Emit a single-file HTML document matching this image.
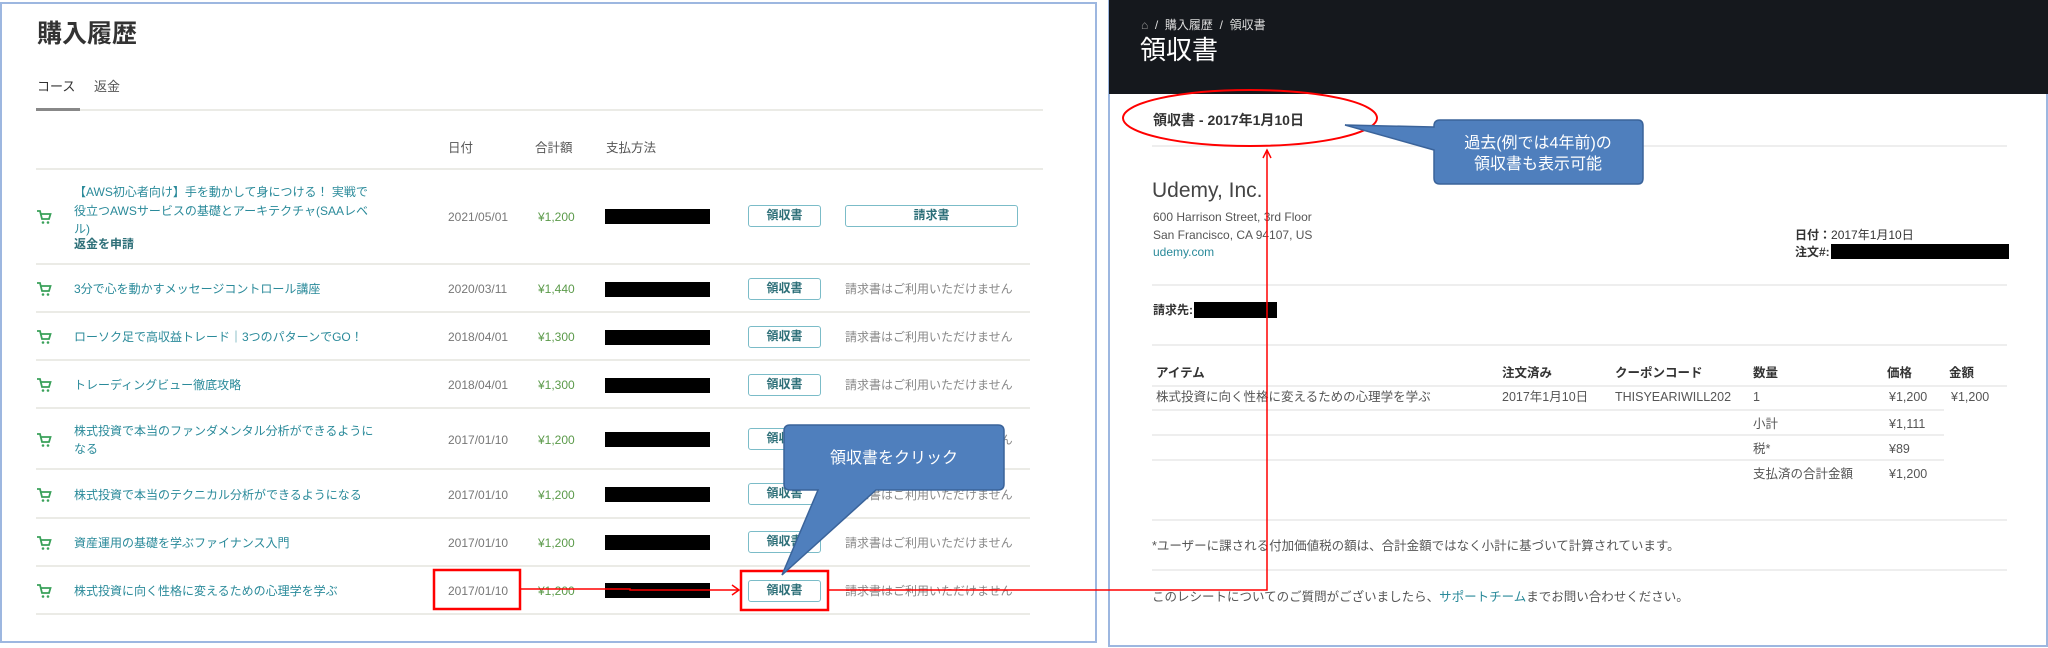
<!DOCTYPE html>
<html><head><meta charset="utf-8"><style>
*{margin:0;padding:0;box-sizing:border-box}
body{width:2048px;height:648px;background:#fff;position:relative;overflow:hidden;font-family:"Liberation Sans","Noto Sans CJK JP",sans-serif;font-size:12.5px;color:#333}
.a{position:absolute;white-space:nowrap;line-height:16px}
.hl{position:absolute;height:2px;background:#ebebe6}
.t{color:#2a8a9a;left:74px;font-size:12px}
.d{left:448px;color:#777;font-size:12px}
.p{left:538px;color:#5b9a4a;font-size:12px}
.bx{position:absolute;left:605px;width:105px;height:15px;background:#000}
.btn{position:absolute;left:748px;width:73px;height:22px;border:1.5px solid #7bbcc8;border-radius:3px;color:#2d6f78;font-weight:bold;font-size:12px;text-align:center;line-height:19px}
.na{left:845px;color:#888;font-size:12px}
.cart{position:absolute;left:36px;width:16px;height:16px}
.rl{position:absolute;height:2px;background:#eee}
.g{color:#555}
</style></head><body>
<div class="a" style="left:0;top:2px;width:1097px;height:641px;border:2px solid #9db7e0"></div>
<div class="a" style="left:37px;top:19px;font-size:25px;line-height:30px;font-weight:bold;color:#333">購入履歴</div>
<div class="a" style="left:37px;top:79px;font-size:13px">コース</div>
<div class="a" style="left:94px;top:79px;font-size:13px;color:#555">返金</div>
<div class="hl" style="left:36px;top:109px;width:1007px"></div>
<div class="a" style="left:36px;top:108px;width:44px;height:3px;background:#888"></div>
<div class="a g" style="left:448px;top:140px">日付</div>
<div class="a g" style="left:535px;top:140px">合計額</div>
<div class="a g" style="left:606px;top:140px">支払方法</div>
<div class="hl" style="left:36px;top:168px;width:1007px"></div>

<svg width="0" height="0" style="position:absolute"><defs><symbol id="c" viewBox="0 0 16 16"><path d="M1 2h3l2 8h7l1.5-5H5" fill="none" stroke="#3aa15a" stroke-width="1.8"/><circle cx="7" cy="13.5" r="1.3" fill="#3aa15a"/><circle cx="12" cy="13.5" r="1.3" fill="#3aa15a"/></symbol></defs></svg>

<svg class="cart" style="top:209px"><use href="#c"/></svg>
<div class="a t" style="top:183px;line-height:18.5px;white-space:normal;width:305px">【AWS初心者向け】手を動かして身につける！ 実戦で役立つAWSサービスの基礎とアーキテクチャ(SAAレベル)</div>
<div class="a" style="left:74px;top:236px;color:#2d6f78;font-weight:bold;font-size:12px">返金を申請</div>
<div class="a d" style="top:209px">2021/05/01</div><div class="a p" style="top:209px">¥1,200</div>
<div class="bx" style="top:209px"></div>
<div class="btn" style="top:205px">領収書</div>
<div class="btn" style="top:205px;left:845px;width:173px">請求書</div>
<div class="hl" style="left:36px;top:263px;width:994px"></div>

<svg class="cart" style="top:281px"><use href="#c"/></svg>
<div class="a t" style="top:281px">3分で心を動かすメッセージコントロール講座</div>
<div class="a d" style="top:281px">2020/03/11</div><div class="a p" style="top:281px">¥1,440</div>
<div class="bx" style="top:282px"></div><div class="btn" style="top:278px">領収書</div>
<div class="a na" style="top:281px">請求書はご利用いただけません</div>
<div class="hl" style="left:36px;top:311px;width:994px"></div>

<svg class="cart" style="top:329px"><use href="#c"/></svg>
<div class="a t" style="top:329px">ローソク足で高収益トレード｜3つのパターンでGO！</div>
<div class="a d" style="top:329px">2018/04/01</div><div class="a p" style="top:329px">¥1,300</div>
<div class="bx" style="top:330px"></div><div class="btn" style="top:326px">領収書</div>
<div class="a na" style="top:329px">請求書はご利用いただけません</div>
<div class="hl" style="left:36px;top:359px;width:994px"></div>

<svg class="cart" style="top:377px"><use href="#c"/></svg>
<div class="a t" style="top:377px">トレーディングビュー徹底攻略</div>
<div class="a d" style="top:377px">2018/04/01</div><div class="a p" style="top:377px">¥1,300</div>
<div class="bx" style="top:378px"></div><div class="btn" style="top:374px">領収書</div>
<div class="a na" style="top:377px">請求書はご利用いただけません</div>
<div class="hl" style="left:36px;top:407px;width:994px"></div>

<svg class="cart" style="top:432px"><use href="#c"/></svg>
<div class="a t" style="top:422px;line-height:18px;white-space:normal;width:300px">株式投資で本当のファンダメンタル分析ができるようになる</div>
<div class="a d" style="top:432px">2017/01/10</div><div class="a p" style="top:432px">¥1,200</div>
<div class="bx" style="top:432px"></div><div class="btn" style="top:428px">領収書</div>
<div class="a na" style="top:432px">請求書はご利用いただけません</div>
<div class="hl" style="left:36px;top:468px;width:994px"></div>

<svg class="cart" style="top:487px"><use href="#c"/></svg>
<div class="a t" style="top:487px">株式投資で本当のテクニカル分析ができるようになる</div>
<div class="a d" style="top:487px">2017/01/10</div><div class="a p" style="top:487px">¥1,200</div>
<div class="bx" style="top:487px"></div><div class="btn" style="top:483px">領収書</div>
<div class="a na" style="top:487px">請求書はご利用いただけません</div>
<div class="hl" style="left:36px;top:517px;width:994px"></div>

<svg class="cart" style="top:535px"><use href="#c"/></svg>
<div class="a t" style="top:535px">資産運用の基礎を学ぶファイナンス入門</div>
<div class="a d" style="top:535px">2017/01/10</div><div class="a p" style="top:535px">¥1,200</div>
<div class="bx" style="top:535px"></div><div class="btn" style="top:531px">領収書</div>
<div class="a na" style="top:535px">請求書はご利用いただけません</div>
<div class="hl" style="left:36px;top:565px;width:994px"></div>

<svg class="cart" style="top:583px"><use href="#c"/></svg>
<div class="a t" style="top:583px">株式投資に向く性格に変えるための心理学を学ぶ</div>
<div class="a d" style="top:583px">2017/01/10</div><div class="a p" style="top:583px">¥1,200</div>
<div class="bx" style="top:583px"></div><div class="btn" style="top:580px">領収書</div>
<div class="a na" style="top:583px">請求書はご利用いただけません</div>
<div class="hl" style="left:36px;top:613px;width:994px"></div>

<div class="a" style="left:1108px;top:0;width:940px;height:647px;border:2px solid #9db7e0;border-top:none"></div>
<div class="a" style="left:1109px;top:0;width:939px;height:94px;background:#15181d"></div>
<div class="a" style="left:1141px;top:17px;color:#ddd;font-size:12px"><span style="color:#999">⌂</span> &nbsp;/ &nbsp;購入履歴 &nbsp;/ &nbsp;領収書</div>
<div class="a" style="left:1140px;top:35px;color:#fff;font-size:26px;line-height:30px">領収書</div>
<div class="a" style="left:1153px;top:112px;font-size:14px;font-weight:bold;color:#333">領収書 - 2017年1月10日</div>
<div class="rl" style="left:1152px;top:145px;width:855px"></div>
<div class="a" style="left:1152px;top:179px;font-size:21px;line-height:24px;color:#444">Udemy, Inc.</div>
<div class="a g" style="left:1153px;top:209px;font-size:12px;line-height:17.5px">600 Harrison Street, 3rd Floor<br>San Francisco, CA 94107, US<br><span style="color:#2a8a9a">udemy.com</span></div>
<div class="a" style="left:1795px;top:227px;font-size:12px"><b>日付：</b>2017年1月10日</div>
<div class="a" style="left:1795px;top:244px;font-size:12px"><b>注文#:</b></div>
<div class="a" style="left:1831px;top:244px;width:178px;height:15px;background:#000"></div>
<div class="rl" style="left:1152px;top:284px;width:855px"></div>
<div class="a" style="left:1153px;top:302px;font-size:12px;font-weight:bold">請求先:</div>
<div class="a" style="left:1194px;top:302px;width:83px;height:16px;background:#000"></div>
<div class="rl" style="left:1152px;top:344px;width:855px"></div>
<div class="a" style="left:1156px;top:365px;font-weight:bold">アイテム</div>
<div class="a" style="left:1502px;top:365px;font-weight:bold">注文済み</div>
<div class="a" style="left:1615px;top:365px;font-weight:bold">クーポンコード</div>
<div class="a" style="left:1753px;top:365px;font-weight:bold">数量</div>
<div class="a" style="left:1887px;top:365px;font-weight:bold">価格</div>
<div class="a" style="left:1949px;top:365px;font-weight:bold">金額</div>
<div class="rl" style="left:1152px;top:385px;width:855px"></div>
<div class="a g" style="left:1156px;top:389px">株式投資に向く性格に変えるための心理学を学ぶ</div>
<div class="a g" style="left:1502px;top:389px">2017年1月10日</div>
<div class="a g" style="left:1615px;top:389px">THISYEARIWILL202</div>
<div class="a g" style="left:1753px;top:389px">1</div>
<div class="a g" style="left:1889px;top:389px">¥1,200</div>
<div class="a g" style="left:1951px;top:389px">¥1,200</div>
<div class="rl" style="left:1152px;top:409px;width:792px"></div>
<div class="a g" style="left:1753px;top:416px">小計</div><div class="a g" style="left:1889px;top:416px">¥1,111</div>
<div class="rl" style="left:1152px;top:434px;width:792px"></div>
<div class="a g" style="left:1753px;top:441px">税*</div><div class="a g" style="left:1889px;top:441px">¥89</div>
<div class="rl" style="left:1152px;top:459px;width:792px"></div>
<div class="a g" style="left:1753px;top:466px">支払済の合計金額</div><div class="a g" style="left:1889px;top:466px">¥1,200</div>
<div class="rl" style="left:1152px;top:519px;width:855px"></div>
<div class="a g" style="left:1152px;top:538px">*ユーザーに課される付加価値税の額は、合計金額ではなく小計に基づいて計算されています。</div>
<div class="rl" style="left:1152px;top:569px;width:855px"></div>
<div class="a g" style="left:1152px;top:589px">このレシートについてのご質問がございましたら、<span style="color:#2a8a9a">サポートチーム</span>までお問い合わせください。</div>

<svg class="a" style="left:0;top:0" width="2048" height="648">
<rect x="434" y="570" width="86" height="39" fill="none" stroke="#f00" stroke-width="2.5"/>
<rect x="741" y="571" width="87" height="39" fill="none" stroke="#f00" stroke-width="2.5"/>
<path d="M520 589H630V590H738" stroke="#f00" stroke-width="1.5" fill="none"/>
<path d="M732 585L739 590L732 595" stroke="#f00" stroke-width="1.5" fill="none"/>
<path d="M828 590H1267V150" stroke="#f00" stroke-width="1.5" fill="none"/>
<path d="M1263 158L1267 150L1271 158" stroke="#f00" stroke-width="1.5" fill="none"/>
<ellipse cx="1250" cy="118" rx="127" ry="28" fill="none" stroke="#f00" stroke-width="2"/>
<path d="M790 425H998Q1004 425 1004 431V484Q1004 490 998 490H876L782 575L818 490H790Q784 490 784 484V431Q784 425 790 425Z" fill="#4f7fbd" stroke="#3a639a" stroke-width="1.5"/>
<text x="894" y="463" fill="#fff" font-size="16" text-anchor="middle" font-family="Liberation Sans,Noto Sans CJK JP,sans-serif">領収書をクリック</text>
<path d="M1440 120H1638Q1643 120 1643 126V178Q1643 184 1638 184H1440Q1434 184 1434 178V150L1345 125L1434 127V126Q1434 120 1440 120Z" fill="#4f7fbd" stroke="#3a639a" stroke-width="1.5"/>
<text x="1538" y="148" fill="#fff" font-size="16" text-anchor="middle" font-family="Liberation Sans,Noto Sans CJK JP,sans-serif">過去(例では4年前)の</text>
<text x="1538" y="169" fill="#fff" font-size="16" text-anchor="middle" font-family="Liberation Sans,Noto Sans CJK JP,sans-serif">領収書も表示可能</text>
</svg>
</body></html>
